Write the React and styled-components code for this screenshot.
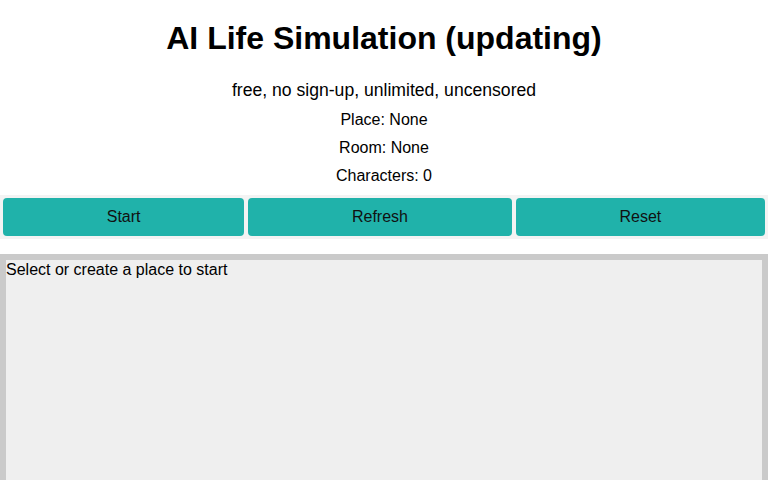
import React from 'react'
import styled, { createGlobalStyle } from 'styled-components'

const GlobalStyle = createGlobalStyle`
    body {
        margin: 0;
        font-family: "Liberation Sans", Arial, sans-serif;
        color: #000;
        background: #fff;
    }
`

const Title = styled.h1`
    font-size: 32px;
    font-weight: 700;
    text-align: center;
    margin: 19px 0 23px;
    line-height: 38px;
`

const Subtitle = styled.div`
    font-size: 17.6px;
    line-height: 20px;
    text-align: center;
`

const InfoList = styled.div`
    display: flex;
    flex-direction: column;
    align-items: center;
    gap: 10px;
    margin-top: 11px;
`

const InfoLine = styled.div`
    font-size: 16px;
    line-height: 18px;
`

const ButtonRow = styled.div`
    display: flex;
    gap: 4px;
    padding: 3px;
    margin-top: 10px;
    background: #f3f3f3;
`

const ActionButton = styled.button`
    flex: 1 1 auto;
    height: 38px;
    border: none;
    border-radius: 4px;
    background: #20b2aa;
    color: #111;
    font-family: "Liberation Sans", Arial, sans-serif;
    font-size: 16px;
    cursor: pointer;
    &:hover {
        opacity: 0.85;
    }
`

const Stage = styled.div`
    margin-top: 15px;
    border: 6px solid #cacaca;
    border-bottom: none;
    background: #efefef;
    height: 219px;
    font-size: 16px;
    line-height: 18px;
    padding: 1px 0 0 0;
`

const App = () => {
    const place = null
    const room = null
    const characters = []
    return (
        <>
            <GlobalStyle />
            <Title>AI Life Simulation (updating)</Title>
            <Subtitle>free, no sign-up, unlimited, uncensored</Subtitle>
            <InfoList>
                <InfoLine>Place: {place ?? 'None'}</InfoLine>
                <InfoLine>Room: {room ?? 'None'}</InfoLine>
                <InfoLine>Characters: {characters.length}</InfoLine>
            </InfoList>
            <ButtonRow>
                <ActionButton>Start</ActionButton>
                <ActionButton>Refresh</ActionButton>
                <ActionButton>Reset</ActionButton>
            </ButtonRow>
            <Stage>Select or create a place to start</Stage>
        </>
    )
}

export default App
